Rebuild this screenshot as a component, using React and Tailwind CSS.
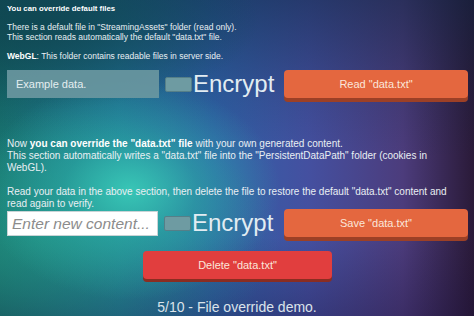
import React from 'react';

const bg =
  "bg-[radial-gradient(ellipse_150px_110px_at_130px_190px,rgba(60,210,188,0.85)_0%,rgba(45,180,170,0.5)_45%,transparent_100%),radial-gradient(ellipse_240px_130px_at_40px_240px,rgba(35,150,130,0.7)_0%,transparent_100%),radial-gradient(ellipse_220px_90px_at_40px_20px,rgba(15,70,80,0.8)_0%,transparent_100%),linear-gradient(to_bottom,rgba(10,35,60,0.5)_0%,rgba(10,35,60,0.15)_30%,transparent_50%,transparent_75%,rgba(20,10,50,0.3)_100%),linear-gradient(to_right,#17706e_0%,#22789a_25%,#3062a8_45%,#4450a0_65%,#4c3c7c_85%,#2a1a38_100%)]";

function Checkbox() {
  return <div className="mt-[7px] ml-[6px] w-[27px] h-[15px] rounded-[2px] bg-[#6e9ba2] border border-[#557f88]" />;
}

function Button({ color, shadow, children, className = '' }) {
  return (
    <button className={`h-[28px] rounded-[4px] text-[11px] text-[#fbe6da] ${color} ${shadow} ${className}`}>
      {children}
    </button>
  );
}

export default function App() {
  return (
    <div className={`w-[474px] h-[316px] overflow-hidden text-[#e9eff3] font-['Liberation_Sans',Arial,sans-serif] ${bg}`}>
      <div className="px-[7px] pt-[4px] text-[8.5px] leading-[9.5px]">
        <p className="font-bold text-[7.8px] text-white">You can override default files</p>
        <p className="mt-[9.5px]">
          There is a default file in "StreamingAssets" folder (read only).
          <br />
          This section reads automatically the default "data.txt" file.
        </p>
        <p className="mt-[9.5px]">
          <span className="font-bold text-white">WebGL</span>: This folder contains readable files in server side.
        </p>
      </div>

      <div className="flex items-start pl-[7px] pr-[6px] mt-[9px]">
        <div className="w-[152px] h-[28px] bg-[#6b98a1]/90 flex items-center pl-[9px] text-[11px] text-[#e4eef0]">
          Example data.
        </div>
        <Checkbox />
        <span className="ml-[1px] text-[24px] leading-[28px] text-[#e2ecf2]">Encrypt</span>
        <Button color="bg-[#e4673f]" shadow="shadow-[0_4px_0_#9c4026]" className="ml-auto w-[184px]">
          Read "data.txt"
        </Button>
      </div>

      <div className="px-[7px] mt-[40px] text-[10px] leading-[12px]">
        <p>
          Now <span className="font-bold text-white">you can override the "data.txt" file</span> with your own generated content.
          <br />
          This section automatically writes a "data.txt" file into the "PersistentDataPath" folder (cookies in WebGL).
        </p>
        <p className="mt-[12px]">
          Read your data in the above section, then delete the file to restore the default "data.txt" content and read again to verify.
        </p>
      </div>

      <div className="flex items-start pl-[7px] pr-[6px] -mt-[1px]">
        <div className="mt-[2px] w-[151px] h-[25px] bg-white border border-[#c9d4d6] flex items-center pl-[4px] text-[15.5px] italic text-[#8c8c8c]">
          Enter new content...
        </div>
        <Checkbox />
        <span className="ml-[1px] text-[24px] leading-[28px] text-[#e2ecf2]">Encrypt</span>
        <Button color="bg-[#e4673f]" shadow="shadow-[0_4px_0_#9c4026]" className="ml-auto w-[184px]">
          Save "data.txt"
        </Button>
      </div>

      <div className="flex justify-center mt-[14px] pl-[1px]">
        <Button color="bg-[#e13e3e]" shadow="shadow-[0_3px_0_#8a2d22]" className="w-[189px]">
          Delete "data.txt"
        </Button>
      </div>

      <p className="mt-[20px] text-center text-[14px] leading-[16px] text-[#dbe3ea]">5/10 - File override demo.</p>
    </div>
  );
}
